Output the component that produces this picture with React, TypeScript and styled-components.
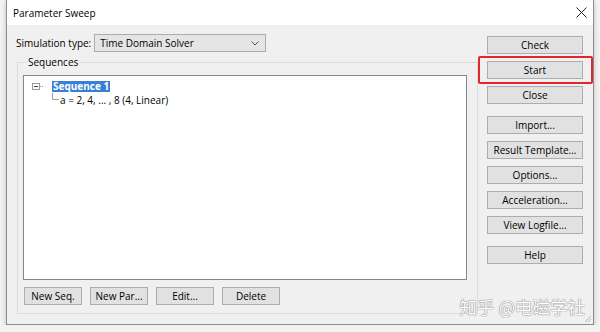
import styled, { createGlobalStyle } from "styled-components";

const GlobalStyle = createGlobalStyle`
  html, body {
    margin: 0;
    padding: 0;
  }
  body {
    background: #f3f3f3;
    font-family: "Open Sans", "Noto Sans", sans-serif;
    font-size: 10px;
    color: #000;
  }
`;

const sideButtons = [
  { label: "Check", gap: 0 },
  { label: "Start", gap: 7, marked: true },
  { label: "Close", gap: 7 },
  { label: "Import...", gap: 12 },
  { label: "Result Template...", gap: 7 },
  { label: "Options...", gap: 7 },
  { label: "Acceleration...", gap: 7 },
  { label: "View Logfile...", gap: 7 },
  { label: "Help", gap: 12 },
];

const listButtons = ["New Seq.", "New Par...", "Edit...", "Delete"];

function App() {
  return (
    <>
      <GlobalStyle />
      <Window>
        <TitleBar>
          <Title>Parameter Sweep</Title>
          <CloseIcon width="11" height="11" viewBox="0 0 11 11">
            <path d="M0.5 0.5 L10.5 10.5 M10.5 0.5 L0.5 10.5" stroke="#222" strokeWidth="1" />
          </CloseIcon>
        </TitleBar>
        <Body>
          <LeftPane>
            <TypeRow>
              <Label>Simulation type:</Label>
              <Combo>
                <span>Time Domain Solver</span>
                <svg width="8" height="5" viewBox="0 0 8 5">
                  <polyline points="0.5,0.5 4,4 7.5,0.5" fill="none" stroke="#555" strokeWidth="1" />
                </svg>
              </Combo>
            </TypeRow>
            <GroupBox>
              <Legend>Sequences</Legend>
              <ListBox>
                <TreeRow>
                  <svg width="20" height="9" viewBox="0 0 20 9">
                    <rect x="0.5" y="1.5" width="7" height="6" fill="#fff" stroke="#9a9a9a" />
                    <line x1="2" y1="4.5" x2="6" y2="4.5" stroke="#444" />
                    <line x1="8" y1="4.5" x2="12" y2="4.5" stroke="#9a9a9a" strokeDasharray="1 1" />
                  </svg>
                  <Selected>Sequence 1</Selected>
                </TreeRow>
                <TreeRow $indent={20}>
                  <svg width="7" height="10" viewBox="0 0 7 10">
                    <polyline points="0.5,0 0.5,6.5 7,6.5" fill="none" stroke="#9a9a9a" />
                  </svg>
                  <ItemText>a = 2, 4, ... , 8 (4, Linear)</ItemText>
                </TreeRow>
              </ListBox>
              <ButtonRow>
                {listButtons.map((b) => (
                  <Button key={b} $width={58}>
                    {b}
                  </Button>
                ))}
              </ButtonRow>
            </GroupBox>
          </LeftPane>
          <RightPane>
            {sideButtons.map((b) => (
              <ButtonSlot key={b.label} $gap={b.gap}>
                <Button $width={96}>{b.label}</Button>
                {b.marked && <Highlight />}
              </ButtonSlot>
            ))}
          </RightPane>
          <Watermark>知乎 @电磁学社</Watermark>
          <Grip width="8" height="8" viewBox="0 0 8 8">
            <path d="M7 1 L1 7 M7 4 L4 7 M7 7 L7 7" stroke="#b5b5b5" strokeWidth="1" />
          </Grip>
        </Body>
      </Window>
    </>
  );
}

const Window = styled.div`
  box-sizing: border-box;
  margin-left: 6px;
  width: 588px;
  height: 325px;
  display: flex;
  flex-direction: column;
  border: 1px solid #8c8c8c;
  border-top: none;
  box-shadow: 0 2px 5px rgba(0, 0, 0, 0.22);
  background: #f0f0f0;
`;

const TitleBar = styled.div`
  height: 25px;
  flex: none;
  display: flex;
  align-items: center;
  justify-content: space-between;
  padding: 0 6px 0 6px;
  background: #fff;
`;

const Title = styled.span`
  font-size: 10px;
  color: #000;
`;

const CloseIcon = styled.svg`
  display: block;
`;

const Body = styled.div`
  position: relative;
  flex: 1;
  display: flex;
  background: #f0f0f0;
`;

const LeftPane = styled.div`
  display: flex;
  flex-direction: column;
  padding: 9px 0 0 10px;
`;

const TypeRow = styled.div`
  display: flex;
  align-items: center;
  gap: 3px;
  height: 18px;
  margin-left: -1px;
`;

const Label = styled.span`
  white-space: nowrap;
`;

const Combo = styled.div`
  box-sizing: border-box;
  width: 172px;
  height: 18px;
  display: flex;
  align-items: center;
  justify-content: space-between;
  padding: 0 6px 0 5px;
  background: #e5e5e5;
  border: 1px solid #acacac;

  svg {
    display: block;
  }
`;

const GroupBox = styled.fieldset`
  box-sizing: border-box;
  width: 461px;
  margin: 3px 0 0;
  padding: 6px 10px 8px 5px;
  border: 1px solid #dcdcdc;
  min-width: 0;
`;

const Legend = styled.legend`
  margin-left: 3px;
  padding: 0 2px;
  line-height: 14px;
`;

const ListBox = styled.div`
  box-sizing: border-box;
  height: 205px;
  background: #fff;
  border: 1px solid #828790;
  padding: 4px 0 0 8px;
`;

const TreeRow = styled.div<{ $indent?: number }>`
  display: flex;
  align-items: center;
  height: 12px;
  padding-left: ${({ $indent }) => $indent ?? 0}px;

  svg {
    display: block;
    flex: none;
  }
`;

const Selected = styled.span`
  background: #3a7fd5;
  color: #fff;
  font-weight: bold;
  padding: 0 1px;
  line-height: 11px;
`;

const ItemText = styled.span`
  margin-left: 1px;
  margin-top: 3px;
`;

const ButtonRow = styled.div`
  display: flex;
  gap: 8px;
  margin: 7px 0 0 1px;
`;

const Button = styled.button<{ $width: number }>`
  box-sizing: border-box;
  width: ${({ $width }) => $width}px;
  height: 18px;
  padding: 0;
  background: #e1e1e1;
  border: 1px solid #adadad;
  border-radius: 0;
  font-family: inherit;
  font-size: 10px;
  color: #000;
  white-space: nowrap;
`;

const RightPane = styled.div`
  display: flex;
  flex-direction: column;
  padding: 11px 0 0 9px;
`;

const ButtonSlot = styled.div<{ $gap: number }>`
  position: relative;
  margin-top: ${({ $gap }) => $gap}px;

  ${Button} {
    display: block;
  }
`;

const Highlight = styled.div`
  position: absolute;
  top: -5px;
  bottom: -5px;
  left: -9px;
  right: -10px;
  border: 2px solid #e0282c;
  border-radius: 2px;
  pointer-events: none;
`;

const Watermark = styled.div`
  position: absolute;
  right: 8px;
  bottom: 9px;
  font-family: "Noto Sans CJK SC", sans-serif;
  font-size: 17.5px;
  line-height: 17px;
  color: #fff;
  text-shadow: 0 0 1px #888, 0 0 1px #888, 0 0 1px #aaa;
  white-space: nowrap;
`;

const Grip = styled.svg`
  position: absolute;
  right: 1px;
  bottom: 1px;
`;

export default App;
